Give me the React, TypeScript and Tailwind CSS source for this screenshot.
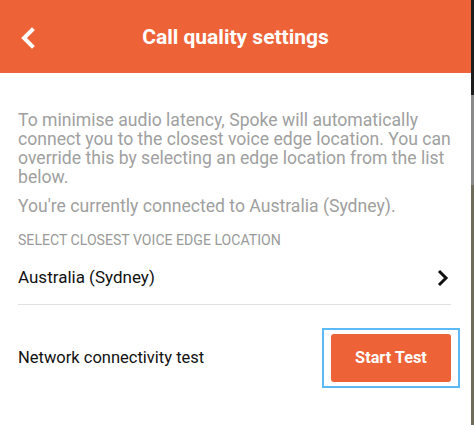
import React from "react";

export default function App() {
  return (
    <div className="flex w-[474px] h-[425px] bg-white" style={{ fontFamily: "Roboto, 'Liberation Sans', sans-serif" }}>
      <div className="flex-1 flex flex-col">
        <div className="h-[73px] bg-[#ee6238] flex items-center relative">
          <svg className="absolute left-[19px] top-[27px]" width="17" height="22" viewBox="0 0 17 22">
            <path d="M13 3 L5 11 L13 19" fill="none" stroke="white" strokeWidth="4" strokeLinecap="square" />
          </svg>
          <div className="flex-1 text-center text-white font-bold text-[21px] leading-none pt-[1px]">Call quality settings</div>
        </div>
        <div className="pl-[18px] pr-[20px] pt-[38px]">
          <p className="text-[#a0a0a0] text-[17.6px] leading-[19px]">
            To minimise audio latency, Spoke will automatically connect you to the closest voice edge location. You can override this by selecting an edge location from the list below.
          </p>
          <p className="text-[#a0a0a0] text-[17.6px] leading-[19px] mt-[10px]">You're currently connected to Australia (Sydney).</p>
          <p className="text-[#9a9a9a] text-[14.1px] leading-[16px] mt-[16px]">SELECT CLOSEST VOICE EDGE LOCATION</p>
          <div className="flex items-center justify-between h-[54px] mt-[3px] border-b border-[#e0e0e0]">
            <span className="text-[#111] text-[17px]">Australia (Sydney)</span>
            <svg width="14" height="20" viewBox="0 0 14 20" className="mr-[1px]">
              <path d="M3 3 L10 10 L3 17" fill="none" stroke="#111" strokeWidth="3" />
            </svg>
          </div>
          <div className="flex items-center justify-between mt-[23px]">
            <span className="text-[#111] text-[16.5px]">Network connectivity test</span>
            <div className="border-2 border-[#5bbaf5] px-[7px] py-[4px] mr-[-9px]">
              <button className="w-[120px] h-[48px] bg-[#ee6238] rounded-[3px] text-white font-bold text-[16.3px]">Start Test</button>
            </div>
          </div>
        </div>
      </div>
      <div className="w-[3px] flex flex-col">
        <div className="h-[95px] bg-[#1c1c1c]" />
        <div className="h-[90px] bg-[#8a8a8a]" />
        <div className="flex-1 bg-[#6f6c5c]" />
      </div>
    </div>
  );
}
